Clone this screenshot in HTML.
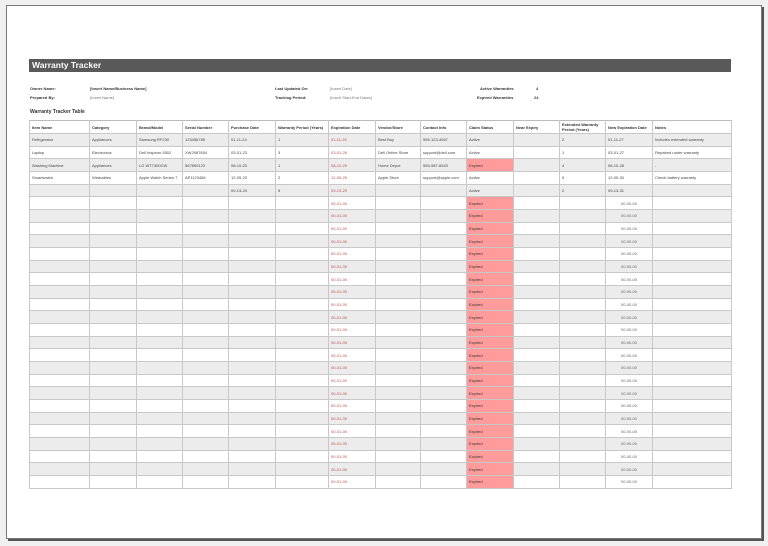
<!DOCTYPE html>
<html><head><style>
body{margin:0;width:768px;height:546px;background:#f0f0f0;position:relative;overflow:hidden;font-family:"Liberation Sans",sans-serif}
.sheet{position:absolute;left:6px;top:5px;width:754px;height:532px;background:#fff;border:1px solid #777;box-shadow:2px 2px 0 #555}
.title{position:absolute;left:29px;top:59px;width:702px;height:13px;background:#595959;color:#fff;font-weight:bold;font-size:8.5px;line-height:13px;text-indent:3px}
.t{position:absolute;font-size:4px;color:#333;white-space:nowrap}
.b{font-weight:bold}
.g{color:#777}
table{position:absolute;left:29px;top:120px;border-collapse:collapse;table-layout:fixed;width:702px;font-size:4px;color:#444}
tr{height:12.68px}
td{border:1px solid #c8c8c8;border-top:1px solid #bbb;padding:0 2px;white-space:nowrap;overflow:hidden;line-height:5px}
tr.h{height:13px}
tr.h td{font-weight:bold;color:#333}
tr:nth-child(even) td{background:#ececec}
.r{color:#c0504d}
.x{background:#ff9b9b!important;color:#333}
.c{text-align:center;color:#666}
</style></head><body>
<div class="sheet"></div>
<div class="title">Warranty Tracker</div>
<div class="t b" style="left:30px;top:86px">Owner Name:</div>
<div class="t b" style="left:90px;top:86px">[Insert Name/Business Name]</div>
<div class="t b" style="left:30px;top:95px">Prepared By:</div>
<div class="t g" style="left:90px;top:95px">[Insert Name]</div>
<div class="t b" style="left:275px;top:86px">Last Updated On:</div>
<div class="t g" style="left:330px;top:86px">[Insert Date]</div>
<div class="t b" style="left:275px;top:95px">Tracking Period:</div>
<div class="t g" style="left:330px;top:95px">[Insert Start-End Dates]</div>
<div class="t b" style="left:480px;top:86px">Active Warranties</div>
<div class="t b" style="left:536px;top:86px">4</div>
<div class="t b" style="left:477px;top:95px">Expired Warranties</div>
<div class="t b" style="left:534px;top:95px">24</div>
<div class="t b" style="left:30px;top:109px;font-size:5px">Warranty Tracker Table</div>
<table>
<colgroup><col style="width:60px"><col style="width:47px"><col style="width:46px"><col style="width:46px"><col style="width:47px"><col style="width:53px"><col style="width:47px"><col style="width:45px"><col style="width:46px"><col style="width:47px"><col style="width:46px"><col style="width:46px"><col style="width:47px"><col style="width:79px"></colgroup>
<tr class="h"><td>Item Name</td><td>Category</td><td>Brand/Model</td><td>Serial Number</td><td>Purchase Date</td><td>Warranty Period (Years)</td><td>Expiration Date</td><td>Vendor/Store</td><td>Contact Info</td><td>Claim Status</td><td>Near Expiry</td><td>Extended Warranty<br>Period (Years)</td><td>New Expiration Date</td><td>Notes</td></tr>
<tr><td>Refrigerator</td><td>Appliances</td><td>Samsung RF23X</td><td>123456789</td><td>01-11-24</td><td>1</td><td class="r">01-11-25</td><td>Best Buy</td><td>555-123-4567</td><td>Active</td><td></td><td>2</td><td>01-11-27</td><td>Includes extended warranty</td></tr>
<tr><td>Laptop</td><td>Electronics</td><td>Dell Inspiron 5502</td><td>XW2987654</td><td>03-01-23</td><td>3</td><td class="r">03-01-26</td><td>Dell Online Store</td><td>support@dell.com</td><td>Active</td><td></td><td>1</td><td>03-01-27</td><td>Repaired under warranty</td></tr>
<tr><td>Washing Machine</td><td>Appliances</td><td>LG WT7300CW</td><td>567890123</td><td>08-10-23</td><td>1</td><td class="r">08-10-29</td><td>Home Depot</td><td>555-987-6543</td><td class="x">Expired</td><td></td><td>4</td><td>08-10-28</td><td>-</td></tr>
<tr><td>Smartwatch</td><td>Wearables</td><td>Apple Watch Series 7</td><td>AP1123456</td><td>12-05-23</td><td>2</td><td class="r">12-05-25</td><td>Apple Store</td><td>support@apple.com</td><td>Active</td><td></td><td>5</td><td>12-05-30</td><td>Check battery warranty</td></tr>
<tr><td></td><td></td><td></td><td></td><td>09-13-24</td><td>5</td><td class="r">09-13-29</td><td></td><td></td><td>Active</td><td></td><td>2</td><td>09-13-31</td><td></td></tr>
<tr><td></td><td></td><td></td><td></td><td></td><td></td><td class="r">00-01-00</td><td></td><td></td><td class="x">Expired</td><td></td><td></td><td class="c">00-00-00</td><td></td></tr>
<tr><td></td><td></td><td></td><td></td><td></td><td></td><td class="r">00-01-00</td><td></td><td></td><td class="x">Expired</td><td></td><td></td><td class="c">00-00-00</td><td></td></tr>
<tr><td></td><td></td><td></td><td></td><td></td><td></td><td class="r">00-01-00</td><td></td><td></td><td class="x">Expired</td><td></td><td></td><td class="c">00-00-00</td><td></td></tr>
<tr><td></td><td></td><td></td><td></td><td></td><td></td><td class="r">00-01-00</td><td></td><td></td><td class="x">Expired</td><td></td><td></td><td class="c">00-00-00</td><td></td></tr>
<tr><td></td><td></td><td></td><td></td><td></td><td></td><td class="r">00-01-00</td><td></td><td></td><td class="x">Expired</td><td></td><td></td><td class="c">00-00-00</td><td></td></tr>
<tr><td></td><td></td><td></td><td></td><td></td><td></td><td class="r">00-01-00</td><td></td><td></td><td class="x">Expired</td><td></td><td></td><td class="c">00-00-00</td><td></td></tr>
<tr><td></td><td></td><td></td><td></td><td></td><td></td><td class="r">00-01-00</td><td></td><td></td><td class="x">Expired</td><td></td><td></td><td class="c">00-00-00</td><td></td></tr>
<tr><td></td><td></td><td></td><td></td><td></td><td></td><td class="r">00-01-00</td><td></td><td></td><td class="x">Expired</td><td></td><td></td><td class="c">00-00-00</td><td></td></tr>
<tr><td></td><td></td><td></td><td></td><td></td><td></td><td class="r">00-01-00</td><td></td><td></td><td class="x">Expired</td><td></td><td></td><td class="c">00-00-00</td><td></td></tr>
<tr><td></td><td></td><td></td><td></td><td></td><td></td><td class="r">00-01-00</td><td></td><td></td><td class="x">Expired</td><td></td><td></td><td class="c">00-00-00</td><td></td></tr>
<tr><td></td><td></td><td></td><td></td><td></td><td></td><td class="r">00-01-00</td><td></td><td></td><td class="x">Expired</td><td></td><td></td><td class="c">00-00-00</td><td></td></tr>
<tr><td></td><td></td><td></td><td></td><td></td><td></td><td class="r">00-01-00</td><td></td><td></td><td class="x">Expired</td><td></td><td></td><td class="c">00-00-00</td><td></td></tr>
<tr><td></td><td></td><td></td><td></td><td></td><td></td><td class="r">00-01-00</td><td></td><td></td><td class="x">Expired</td><td></td><td></td><td class="c">00-00-00</td><td></td></tr>
<tr><td></td><td></td><td></td><td></td><td></td><td></td><td class="r">00-01-00</td><td></td><td></td><td class="x">Expired</td><td></td><td></td><td class="c">00-00-00</td><td></td></tr>
<tr><td></td><td></td><td></td><td></td><td></td><td></td><td class="r">00-01-00</td><td></td><td></td><td class="x">Expired</td><td></td><td></td><td class="c">00-00-00</td><td></td></tr>
<tr><td></td><td></td><td></td><td></td><td></td><td></td><td class="r">00-01-00</td><td></td><td></td><td class="x">Expired</td><td></td><td></td><td class="c">00-00-00</td><td></td></tr>
<tr><td></td><td></td><td></td><td></td><td></td><td></td><td class="r">00-01-00</td><td></td><td></td><td class="x">Expired</td><td></td><td></td><td class="c">00-00-00</td><td></td></tr>
<tr><td></td><td></td><td></td><td></td><td></td><td></td><td class="r">00-01-00</td><td></td><td></td><td class="x">Expired</td><td></td><td></td><td class="c">00-00-00</td><td></td></tr>
<tr><td></td><td></td><td></td><td></td><td></td><td></td><td class="r">00-01-00</td><td></td><td></td><td class="x">Expired</td><td></td><td></td><td class="c">00-00-00</td><td></td></tr>
<tr><td></td><td></td><td></td><td></td><td></td><td></td><td class="r">00-01-00</td><td></td><td></td><td class="x">Expired</td><td></td><td></td><td class="c">00-00-00</td><td></td></tr>
<tr><td></td><td></td><td></td><td></td><td></td><td></td><td class="r">00-01-00</td><td></td><td></td><td class="x">Expired</td><td></td><td></td><td class="c">00-00-00</td><td></td></tr>
<tr><td></td><td></td><td></td><td></td><td></td><td></td><td class="r">00-01-00</td><td></td><td></td><td class="x">Expired</td><td></td><td></td><td class="c">00-00-00</td><td></td></tr>
<tr><td></td><td></td><td></td><td></td><td></td><td></td><td class="r">00-01-00</td><td></td><td></td><td class="x">Expired</td><td></td><td></td><td class="c">00-00-00</td><td></td></tr>
</table>
</body></html>
